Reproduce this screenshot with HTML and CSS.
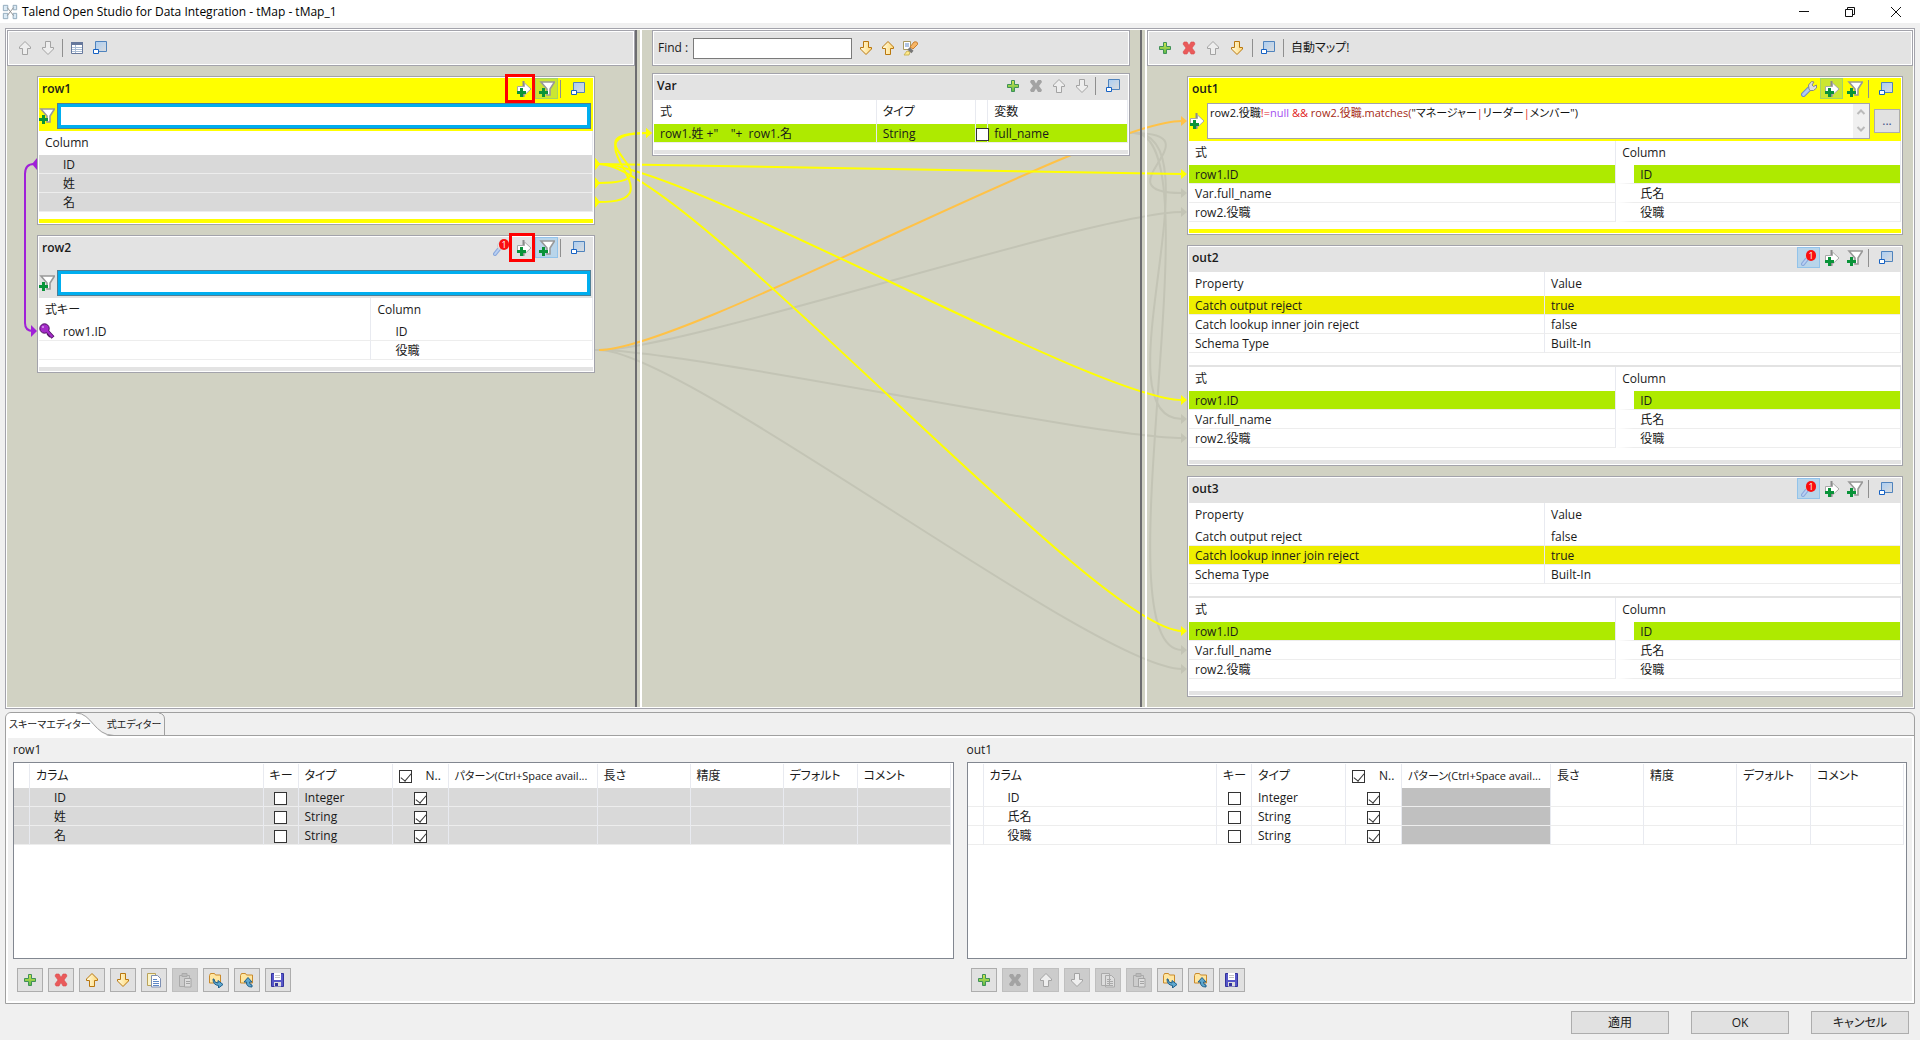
FILE: index.html
```html
<!DOCTYPE html>
<html lang="ja">
<head>
    <meta charset="utf-8">
    <meta name="viewport" content="width=device-width, initial-scale=1.0">
    <title>Talend Open Studio for Data Integration - tMap - tMap_1</title>
    <link rel="stylesheet" href="styles.css">
</head>
<body>
    <svg class="defs" aria-hidden="true">
        <defs>
            <linearGradient id="g-green" x1="0" y1="0" x2="0" y2="1"><stop offset="0" stop-color="#d3e84f"/><stop offset="1" stop-color="#5cb947"/></linearGradient>
            <linearGradient id="g-blue" x1="0" y1="0" x2="1" y2="1"><stop offset="0" stop-color="#a9cdf3"/><stop offset="1" stop-color="#dcdcdc"/></linearGradient>
            <linearGradient id="g-gold" x1="0" y1="0" x2="1" y2="0"><stop offset="0" stop-color="#fffbe0"/><stop offset="1" stop-color="#ffd97a"/></linearGradient>
        </defs>
        <symbol id="i-add" viewBox="0 0 16 16"><path d="M6.5 2.5h3v4h4v3h-4v4h-3v-4h-4v-3h4z" fill="url(#g-green)" stroke="#3f9158"/></symbol>
        <symbol id="i-del" viewBox="0 0 16 16"><path d="M3 2h3l2 3.500 2-3.500h3l1 2-3 4 3 4-1 2h-3l-2-3.500-2 3.500h-3l-1-2 3-4-3-4z" fill="#ea5a5a" stroke="#d8494b" stroke-width=".6"/></symbol>
        <symbol id="i-delgrey" viewBox="0 0 16 16"><path d="M3 2h3l2 3.500 2-3.500h3l1 2-3 4 3 4-1 2h-3l-2-3.500-2 3.500h-3l-1-2 3-4-3-4z" fill="#a3a3a3"/></symbol>
        <symbol id="i-up" viewBox="0 0 16 16"><path d="M8 1.500 13.500 7v1.500H10.500v6h-5v-6H2.500V7z" fill="url(#g-gold)" stroke="#b9770e"/></symbol>
        <symbol id="i-down" viewBox="0 0 16 16"><path d="M8 14.500 13.500 9V7.500H10.500v-6h-5v6H2.500V9z" fill="url(#g-gold)" stroke="#b9770e"/></symbol>
        <symbol id="i-upgrey" viewBox="0 0 16 16"><path d="M8 1.500 13.500 7v1.500H10.500v6h-5v-6H2.500V7z" fill="#eee" stroke="#a3a3a3"/></symbol>
        <symbol id="i-downgrey" viewBox="0 0 16 16"><path d="M8 14.500 13.500 9V7.500H10.500v-6h-5v6H2.500V9z" fill="#eee" stroke="#a3a3a3"/></symbol>
        <symbol id="i-restore" viewBox="0 0 16 16"><path d="M3.500 1.500h11v10h-11z" fill="url(#g-blue)" stroke="#4f83bd"/><path d="M1.500 9.500h5v4h-5z" fill="#fff" stroke="#1662c4"/></symbol>
        <symbol id="i-table" viewBox="0 0 16 16"><path d="M2.500 2.500h11v11h-11z" fill="#fff" stroke="#66789c"/><path d="M2 2h12v3H2z" fill="#66789c"/><path d="M3 7.500h10M3 9.500h10M3 11.500h10M6.500 5v8" stroke="#a9bcd4"/></symbol>
        <symbol id="i-expr" viewBox="0 0 16 16"><path d="M7.500 0v16" stroke="#8c8c8c" stroke-width="2"/><path d="M1.500 5.500h7v-3.500l6.500 6-6.500 6v-3.500h-7z" fill="#fff" stroke="#a8a8a8"/><path d="M4 7h3v3h3v3H7v3H4v-3H1v-3h3z" fill="#0a9339"/></symbol>
        <symbol id="i-filter" viewBox="0 0 16 16"><path d="M2 1h13.500l-4.500 7v6h-3V8z" fill="#fff" stroke="#999" stroke-width="1.600"/><path d="M3 7h3v3h3v3H6v3H3v-3H0v-3h3z" fill="#0a9339"/></symbol>
        <symbol id="i-wrench" viewBox="0 0 16 16"><path d="M2.500 13.500 8 8" stroke="#6e8bc6" stroke-width="5" stroke-linecap="round"/><path d="M2.500 13.500 8 8" stroke="#afc9f5" stroke-width="3" stroke-linecap="round"/><path d="M8 8 7.500 4l3-3.500 2.500.500-2 3 1.500 1.500 3-1.500v3l-3 2.500H9z" fill="#ddd" stroke="#888"/></symbol>
        <symbol id="i-search" viewBox="0 0 16 16"><path d="M2 14 6 9" stroke="#8aa8dc" stroke-width="4" stroke-linecap="round"/><path d="M2 14 6 9" stroke="#b9d0f3" stroke-width="2" stroke-linecap="round"/><circle cx="8" cy="6" r="3.500" fill="#eee" stroke="#ccc"/></symbol>
        <symbol id="i-key" viewBox="0 0 16 16"><path d="M7 7l7 7.500M12 10l-3 3" stroke="#4d1060" stroke-width="4"/><circle cx="5.500" cy="5.500" r="4.700" fill="#a42cc9" stroke="#4d1060"/><path d="M7 7l6.500 7" stroke="#a42cc9" stroke-width="2.500"/><circle cx="4" cy="4" r="1" fill="#dba0ee"/></symbol>
        <symbol id="i-mark" viewBox="0 0 16 16"><path d="M1.500 1.500h7v8h-7z" fill="#fff" stroke="#a89a60"/><path d="M3 4h4M3 6h4" stroke="#5f88c4"/><path d="M8 7l4-5q4-1 3.500 2.500L11 9z" fill="#f7b565" stroke="#c97e2e"/><path d="M2 15l3-4 3 1-1 3z" fill="#ffe98a" stroke="#cdb75a"/><path d="M6.500 8.500 10.500 12" stroke="#777" stroke-width="3"/></symbol>
        <symbol id="i-copy" viewBox="0 0 16 16"><path d="M1.500 1.500h8v12h-8z" fill="#fbf4c9" stroke="#b9a25a"/><path d="M5.500 3.500h6l3 3v8.500h-9z" fill="#fff" stroke="#7d8fb3"/><path d="M7 7.500h4M7 9.500h6M7 11.500h6M7 13.500h6" stroke="#5f88c4"/></symbol>
        <symbol id="i-copygrey" viewBox="0 0 16 16"><path d="M1.500 1.500h8v12h-8zM5.500 3.500h6l3 3v8.500h-9z" fill="#ddd" stroke="#aaa"/><path d="M7 7.500h4M7 9.500h6M7 11.500h6M7 13.500h6" stroke="#aaa"/></symbol>
        <symbol id="i-paste" viewBox="0 0 16 16"><path d="M2.500 3.500h10v11h-10z" fill="#ccc" stroke="#aaa"/><path d="M5 1.500h5v3H5z" fill="#bbb" stroke="#aaa"/><path d="M7.500 6.500h6.500v8.500H7.500z" fill="#ddd" stroke="#a5a5a5"/><path d="M9 9.500h4M9 11.500h4" stroke="#a5a5a5"/></symbol>
        <symbol id="i-import" viewBox="0 0 16 16"><path d="M1.500 3.500l1-2h4l1 1.500h5v8h-11z" fill="#ffe6a0" stroke="#c98a2c"/><path d="M6 7q0 4 4 4V8.500l5 4-4.500 3.500v-2.500Q5 13 5 7z" fill="#5fa8cf" stroke="#1f5f8b"/></symbol>
        <symbol id="i-export" viewBox="0 0 16 16"><path d="M1.500 3.500l1-2h4l1 1.500h6v8h-12z" fill="#ffe6a0" stroke="#c98a2c"/><path d="M13 15Q7 15 7.500 10H5l4-4.500 4 4.500h-2.500q0 3 2.500 3z" fill="#5fa8cf" stroke="#1f5f8b"/></symbol>
        <symbol id="i-save" viewBox="0 0 16 16"><path d="M1.500 1.500h12v13h-12z" fill="#5656c8" stroke="#33339c"/><path d="M4 1h7v7H4z" fill="#fff"/><path d="M5 3.500h5M5 5.500h5" stroke="#c3c3c3"/><path d="M4 10h7v4.500H4z" fill="#ddd"/><path d="M5 11h3v3H5z" fill="#33339c"/></symbol>
        <symbol id="i-logo" viewBox="0 0 18 18"><path d="M1.500 1.500h5v6h-5zM1.500 10.500h5v6h-5zM12.500 1.500h4v5h-4zM12.500 10.500h4v6h-4z" fill="#dbeaf5" stroke="#8ba5b8"/><path d="M6 4l7 9M6 13l7-9" stroke="#888" fill="none"/></symbol>
    </svg>

    <header class="titlebar">
        <svg class="logo"><use href="#i-logo"/></svg>
        <h1>Talend Open Studio for Data Integration - tMap - tMap_1</h1>
        <button class="win" aria-label="最小化"><svg viewBox="0 0 12 12"><path d="M1 5.500h10"/></svg></button>
        <button class="win" aria-label="元に戻す"><svg viewBox="0 0 12 12"><path d="M1.500 3.500h7v7h-7zM3.500 3.500v-2h7v7h-2"/></svg></button>
        <button class="win" aria-label="閉じる"><svg viewBox="0 0 12 12"><path d="M1 1l10 10M11 1 1 11"/></svg></button>
    </header>

    <main class="mapper" id="mapper">
        <svg class="links" id="links" aria-hidden="true"></svg>

        <section class="pane">
            <div class="toolbar">
                <button class="tool" aria-label="上へ"><svg><use href="#i-upgrey"/></svg></button>
                <button class="tool" aria-label="下へ"><svg><use href="#i-downgrey"/></svg></button>
                <span class="sep"></span>
                <button class="tool" aria-label="テーブル"><svg><use href="#i-table"/></svg></button>
                <button class="tool" aria-label="最小化"><svg><use href="#i-restore"/></svg></button>
            </div>
            <div class="cards inputs">
                <article class="card active">
                    <header class="card-head">
                        <h2>row1</h2>
                        <button class="act marked wide" aria-label="式フィルター"><svg><use href="#i-expr"/></svg></button>
                        <button class="act on" aria-label="フィルター"><svg><use href="#i-filter"/></svg></button>
                        <span class="sep"></span>
                        <button class="act last" aria-label="最小化"><svg><use href="#i-restore"/></svg></button>
                    </header>
                    <div class="filter">
                        <svg><use href="#i-filter"/></svg>
                        <input type="text" aria-label="row1 フィルター">
                    </div>
                    <table class="grid">
                        <thead><tr><th>Column</th></tr></thead>
                        <tbody class="selected">
                            <tr id="row1-id"><td class="deep">ID</td></tr>
                            <tr id="row1-sei"><td class="deep">姓</td></tr>
                            <tr id="row1-mei"><td class="deep">名</td></tr>
                        </tbody>
                    </table>
                    <div class="foot"></div>
                </article>

                <article class="card">
                    <header class="card-head">
                        <h2>row2</h2>
                        <button class="act" aria-label="設定"><svg><use href="#i-search"/></svg><span class="badge">1</span></button>
                        <button class="act marked" aria-label="式フィルター"><svg><use href="#i-expr"/></svg></button>
                        <button class="act on" aria-label="フィルター"><svg><use href="#i-filter"/></svg></button>
                        <span class="sep"></span>
                        <button class="act last" aria-label="最小化"><svg><use href="#i-restore"/></svg></button>
                    </header>
                    <div class="filter spaced">
                        <svg><use href="#i-filter"/></svg>
                        <input type="text" aria-label="row2 フィルター">
                    </div>
                    <table class="grid">
                        <colgroup><col class="w-key"><col></colgroup>
                        <thead><tr><th>式キー</th><th>Column</th></tr></thead>
                        <tbody>
                            <tr id="row2-id"><td><span class="keyed"><svg><use href="#i-key"/></svg>row1.ID</span></td><td class="deep">ID</td></tr>
                            <tr id="row2-yaku"><td></td><td class="deep">役職</td></tr>
                        </tbody>
                    </table>
                    <div class="foot"></div>
                </article>
            </div>
        </section>

        <div class="sash"></div>

        <section class="pane middle">
            <div class="toolbar find">
                <label for="find">Find :</label>
                <input type="text" id="find">
                <button class="tool" aria-label="次へ"><svg><use href="#i-down"/></svg></button>
                <button class="tool" aria-label="前へ"><svg><use href="#i-up"/></svg></button>
                <button class="tool" aria-label="強調表示"><svg><use href="#i-mark"/></svg></button>
            </div>
            <article class="card var">
                <header class="card-head">
                    <h2>Var</h2>
                    <button class="act" aria-label="追加"><svg><use href="#i-add"/></svg></button>
                    <button class="act" aria-label="削除"><svg><use href="#i-delgrey"/></svg></button>
                    <button class="act" aria-label="上へ"><svg><use href="#i-upgrey"/></svg></button>
                    <button class="act" aria-label="下へ"><svg><use href="#i-downgrey"/></svg></button>
                    <span class="sep"></span>
                    <button class="act last" aria-label="最小化"><svg><use href="#i-restore"/></svg></button>
                </header>
                <table class="grid">
                    <colgroup><col class="w-var"><col class="w-type"><col class="w-tick"><col></colgroup>
                    <thead><tr><th>式</th><th>タイプ</th><th></th><th>変数</th></tr></thead>
                    <tbody>
                        <tr id="var-full" class="green">
                            <td class="pre">row1.姓 +"    "+  row1.名</td>
                            <td>String</td>
                            <td class="tick"><input type="checkbox" aria-label="ヌル可"></td>
                            <td>full_name</td>
                        </tr>
                    </tbody>
                </table>
                <div class="foot"></div>
            </article>
        </section>

        <div class="sash"></div>

        <section class="pane">
            <div class="toolbar outbar">
                <button class="tool" aria-label="追加"><svg><use href="#i-add"/></svg></button>
                <button class="tool" aria-label="削除"><svg><use href="#i-del"/></svg></button>
                <button class="tool" aria-label="上へ"><svg><use href="#i-upgrey"/></svg></button>
                <button class="tool" aria-label="下へ"><svg><use href="#i-down"/></svg></button>
                <span class="sep"></span>
                <button class="tool" aria-label="最小化"><svg><use href="#i-restore"/></svg></button>
                <span class="sep"></span>
                <button class="automap">自動マップ!</button>
            </div>
            <div class="cards outputs">
                <article class="card active">
                    <header class="card-head">
                        <h2>out1</h2>
                        <button class="act" aria-label="設定"><svg><use href="#i-wrench"/></svg></button>
                        <button class="act on" aria-label="式フィルター"><svg><use href="#i-expr"/></svg></button>
                        <button class="act" aria-label="フィルター"><svg><use href="#i-filter"/></svg></button>
                        <span class="sep"></span>
                        <button class="act last" aria-label="最小化"><svg><use href="#i-restore"/></svg></button>
                    </header>
                    <div class="expr" id="out1-filter">
                        <svg><use href="#i-expr"/></svg>
                        <div class="code">
                            <div class="code-text" role="textbox" contenteditable="true" spellcheck="false" aria-label="式フィルター">row2.役職<i class="op">!=</i><i class="kw">null</i> <i class="op">&amp;&amp;</i> <i class="fn">row2.役職.matches(</i>"マネージャー<i class="op">|</i>リーダー<i class="op">|</i>メンバー")</div>
                            <svg class="scroll" viewBox="0 0 16 34"><path d="M4.500 10 8 6.500l3.500 3.500M4.500 23l3.500 3.500 3.500-3.500"/></svg>
                        </div>
                        <button class="more">...</button>
                    </div>
                    <table class="grid">
                        <colgroup><col class="w-expr"><col></colgroup>
                        <thead><tr><th>式</th><th>Column</th></tr></thead>
                        <tbody>
                            <tr id="out1-id" class="green"><td>row1.ID</td><td class="indent">ID</td></tr>
                            <tr id="out1-name"><td>Var.full_name</td><td class="indent">氏名</td></tr>
                            <tr id="out1-yaku"><td>row2.役職</td><td class="indent">役職</td></tr>
                        </tbody>
                    </table>
                    <div class="foot"></div>
                </article>

                <article class="card">
                    <header class="card-head">
                        <h2>out2</h2>
                        <button class="act on" aria-label="設定"><svg><use href="#i-search"/></svg><span class="badge">1</span></button>
                        <button class="act" aria-label="式フィルター"><svg><use href="#i-expr"/></svg></button>
                        <button class="act" aria-label="フィルター"><svg><use href="#i-filter"/></svg></button>
                        <span class="sep"></span>
                        <button class="act last" aria-label="最小化"><svg><use href="#i-restore"/></svg></button>
                    </header>
                    <table class="grid props">
                        <colgroup><col class="w-prop"><col></colgroup>
                        <thead><tr><th>Property</th><th>Value</th></tr></thead>
                        <tbody>
                            <tr class="yellow"><td>Catch output reject</td><td>true</td></tr>
                            <tr><td>Catch lookup inner join reject</td><td>false</td></tr>
                            <tr><td>Schema Type</td><td>Built-In</td></tr>
                        </tbody>
                    </table>
                    <table class="grid">
                        <colgroup><col class="w-expr"><col></colgroup>
                        <thead><tr><th>式</th><th>Column</th></tr></thead>
                        <tbody>
                            <tr id="out2-id" class="green"><td>row1.ID</td><td class="indent">ID</td></tr>
                            <tr id="out2-name"><td>Var.full_name</td><td class="indent">氏名</td></tr>
                            <tr id="out2-yaku"><td>row2.役職</td><td class="indent">役職</td></tr>
                        </tbody>
                    </table>
                    <div class="foot tall"></div>
                </article>

                <article class="card">
                    <header class="card-head">
                        <h2>out3</h2>
                        <button class="act on" aria-label="設定"><svg><use href="#i-search"/></svg><span class="badge">1</span></button>
                        <button class="act" aria-label="式フィルター"><svg><use href="#i-expr"/></svg></button>
                        <button class="act" aria-label="フィルター"><svg><use href="#i-filter"/></svg></button>
                        <span class="sep"></span>
                        <button class="act last" aria-label="最小化"><svg><use href="#i-restore"/></svg></button>
                    </header>
                    <table class="grid props">
                        <colgroup><col class="w-prop"><col></colgroup>
                        <thead><tr><th>Property</th><th>Value</th></tr></thead>
                        <tbody>
                            <tr><td>Catch output reject</td><td>false</td></tr>
                            <tr class="yellow"><td>Catch lookup inner join reject</td><td>true</td></tr>
                            <tr><td>Schema Type</td><td>Built-In</td></tr>
                        </tbody>
                    </table>
                    <table class="grid">
                        <colgroup><col class="w-expr"><col></colgroup>
                        <thead><tr><th>式</th><th>Column</th></tr></thead>
                        <tbody>
                            <tr id="out3-id" class="green"><td>row1.ID</td><td class="indent">ID</td></tr>
                            <tr id="out3-name"><td>Var.full_name</td><td class="indent">氏名</td></tr>
                            <tr id="out3-yaku"><td>row2.役職</td><td class="indent">役職</td></tr>
                        </tbody>
                    </table>
                    <div class="foot tall"></div>
                </article>
            </div>
        </section>
    </main>

    <section class="editor">
        <div class="tabs" role="tablist">
            <svg class="tab-shape" viewBox="0 0 160 24" aria-hidden="true">
                <path d="M0 24V6Q0 0 6 0H70C86 0 88 23.500 108 23.500V24z" fill="#fff"/>
                <path d="M70 0C86 0 88 22.500 108 22.500H160M158.500 23V6Q158.500 1 153 0" fill="none" stroke="#a0a0a0"/>
            </svg>
            <button class="tab" role="tab" aria-selected="true">スキーマエディター</button>
            <button class="tab" role="tab" aria-selected="false">式エディター</button>
        </div>
        <div class="schemas">
            <div class="schema">
                <h3>row1</h3>
                <div class="list">
                    <table class="grid">
                        <colgroup><col class="c-mark"><col><col class="c-key"><col class="c-type"><col class="c-null"><col class="c-pattern"><col class="c-num"><col class="c-num"><col class="c-def"><col class="c-num"></colgroup>
                        <thead><tr><th></th><th>カラム</th><th>キー</th><th>タイプ</th><th class="nullable"><input type="checkbox" checked aria-label="すべてヌル可"><span>N..</span></th><th class="small">パターン(Ctrl+Space avail...</th><th>長さ</th><th>精度</th><th>デフォルト</th><th>コメント</th></tr></thead>
                        <tbody class="selected">
                            <tr><td></td><td class="deep">ID</td><td class="tick"><input type="checkbox" aria-label="キー"></td><td>Integer</td><td class="tick"><input type="checkbox" checked aria-label="ヌル可"></td><td></td><td></td><td></td><td></td><td></td></tr>
                            <tr><td></td><td class="deep">姓</td><td class="tick"><input type="checkbox" aria-label="キー"></td><td>String</td><td class="tick"><input type="checkbox" checked aria-label="ヌル可"></td><td></td><td></td><td></td><td></td><td></td></tr>
                            <tr><td></td><td class="deep">名</td><td class="tick"><input type="checkbox" aria-label="キー"></td><td>String</td><td class="tick"><input type="checkbox" checked aria-label="ヌル可"></td><td></td><td></td><td></td><td></td><td></td></tr>
                        </tbody>
                    </table>
                </div>
                <div class="buttons">
                    <button aria-label="追加"><svg><use href="#i-add"/></svg></button>
                    <button aria-label="削除"><svg><use href="#i-del"/></svg></button>
                    <button aria-label="上へ"><svg><use href="#i-up"/></svg></button>
                    <button aria-label="下へ"><svg><use href="#i-down"/></svg></button>
                    <button aria-label="コピー"><svg><use href="#i-copy"/></svg></button>
                    <button aria-label="貼り付け" disabled><svg><use href="#i-paste"/></svg></button>
                    <button aria-label="インポート"><svg><use href="#i-import"/></svg></button>
                    <button aria-label="エクスポート"><svg><use href="#i-export"/></svg></button>
                    <button aria-label="保存"><svg><use href="#i-save"/></svg></button>
                </div>
            </div>
            <div class="schema">
                <h3>out1</h3>
                <div class="list">
                    <table class="grid">
                        <colgroup><col class="c-mark"><col><col class="c-key"><col class="c-type"><col class="c-null"><col class="c-pattern"><col class="c-num"><col class="c-num"><col class="c-def"><col class="c-num"></colgroup>
                        <thead><tr><th></th><th>カラム</th><th>キー</th><th>タイプ</th><th class="nullable"><input type="checkbox" checked aria-label="すべてヌル可"><span>N..</span></th><th class="small">パターン(Ctrl+Space avail...</th><th>長さ</th><th>精度</th><th>デフォルト</th><th>コメント</th></tr></thead>
                        <tbody>
                            <tr><td></td><td class="deep">ID</td><td class="tick"><input type="checkbox" aria-label="キー"></td><td>Integer</td><td class="tick"><input type="checkbox" checked aria-label="ヌル可"></td><td class="off"></td><td></td><td></td><td></td><td></td></tr>
                            <tr><td></td><td class="deep">氏名</td><td class="tick"><input type="checkbox" aria-label="キー"></td><td>String</td><td class="tick"><input type="checkbox" checked aria-label="ヌル可"></td><td class="off"></td><td></td><td></td><td></td><td></td></tr>
                            <tr><td></td><td class="deep">役職</td><td class="tick"><input type="checkbox" aria-label="キー"></td><td>String</td><td class="tick"><input type="checkbox" checked aria-label="ヌル可"></td><td class="off"></td><td></td><td></td><td></td><td></td></tr>
                        </tbody>
                    </table>
                </div>
                <div class="buttons">
                    <button aria-label="追加"><svg><use href="#i-add"/></svg></button>
                    <button aria-label="削除" disabled><svg><use href="#i-delgrey"/></svg></button>
                    <button aria-label="上へ" disabled><svg><use href="#i-upgrey"/></svg></button>
                    <button aria-label="下へ" disabled><svg><use href="#i-downgrey"/></svg></button>
                    <button aria-label="コピー" disabled><svg><use href="#i-copygrey"/></svg></button>
                    <button aria-label="貼り付け" disabled><svg><use href="#i-paste"/></svg></button>
                    <button aria-label="インポート"><svg><use href="#i-import"/></svg></button>
                    <button aria-label="エクスポート"><svg><use href="#i-export"/></svg></button>
                    <button aria-label="保存"><svg><use href="#i-save"/></svg></button>
                </div>
            </div>
        </div>
    </section>

    <footer class="dialog-buttons">
        <button>適用</button>
        <button>OK</button>
        <button>キャンセル</button>
    </footer>
    <script src="links.js"></script>
</body>
</html>
```

FILE: styles.css
```css
* {
    box-sizing: border-box;
}
body {
    margin: 0;
    min-height: 100vh;
    display: flex;
    flex-direction: column;
    background: #f0f0f0;
    color: #1a1a1a;
    font: 12px/16px "Open Sans", "Noto Sans CJK JP", sans-serif;
    font-feature-settings: "palt";
}
button, input {
    font: inherit;
    font-feature-settings: inherit;
    color: inherit;
    padding: 0;
    margin: 0;
}
h1, h2, h3 {
    margin: 0;
    font-size: 12px;
    font-weight: normal;
}
svg {
    display: block;
    flex: none;
    width: 16px;
    height: 16px;
}
.defs {
    position: absolute;
    width: 0;
    height: 0;
}

/* title bar */
.titlebar {
    display: flex;
    align-items: center;
    height: 23px;
    padding-left: 2px;
    background: #fff;
    color: #000;
}
.titlebar h1 {
    flex: 1;
    padding-left: 4px;
}
.win {
    width: 46px;
    height: 20px;
    border: none;
    background: none;
    display: grid;
    place-items: center;
}
.win:last-child {
    margin-right: 1px;
}
.win svg {
    width: 12px;
    height: 12px;
    fill: none;
    stroke: #111;
}

/* mapper */
.mapper {
    position: relative;
    display: grid;
    grid-template-columns: 628fr 7px 498fr 7px 766fr;
    margin: 5px 5px 3px;
    border: 1px solid #a3a3ab;
    outline: 1px solid #fff;
    outline-offset: -2px;
    padding: 1px;
    background: #d1d2c3;
}
.links {
    position: absolute;
    inset: 0;
    width: 100%;
    height: 100%;
}
.pane {
    min-width: 0;
}
.middle {
    padding: 0 10px;
}
.sash {
    position: relative;
    border-left: 2px solid #6d6d70;
    border-right: 2px solid #fff;
}
.toolbar {
    position: relative;
    display: flex;
    align-items: center;
    height: 36px;
    padding: 0 9px;
    gap: 7px;
    background: #e3e3e3;
    border: 1px solid #a3a3ab;
    box-shadow: inset 0 0 0 1px #fff;
}
.outbar {
    gap: 8px;
}
.find {
    padding: 0 5px;
    gap: 6px;
}
.find label {
    width: 29px;
    white-space: nowrap;
}
.find input {
    width: 159px;
    height: 21px;
    padding: 0 4px;
    background: #fff;
    border: 1px solid #7a7a7a;
}
.tool, .act, .automap {
    display: grid;
    place-items: center;
    border: none;
    background: none;
}
.sep {
    width: 1px;
    height: 18px;
    background: #8f8f8f;
}
.toolbar .sep {
    margin: 0 -1px;
}
.cards {
    display: grid;
    gap: 10px;
}
.inputs {
    padding: 10px 40px 10px 30px;
}
.outputs {
    padding: 10px 10px 10px 40px;
}
.card {
    position: relative;
    padding: 1px;
    background: #fff;
    border: 1px solid #a3a3ab;
}
.var {
    margin-top: 7px;
}
.card-head {
    display: flex;
    align-items: flex-start;
    height: 25px;
    padding-right: 6px;
    background: #e3e3e3;
}
.card-head h2 {
    flex: 1;
    padding: 3px 3px 0;
    font-weight: 600;
}
.card-head .sep {
    margin: 2px 4px 0 2px;
}
.active .card-head, .active .filter, .active .expr, .active .foot {
    background-color: #ff0;
}
.act {
    position: relative;
    width: 23px;
    height: 21px;
}
.act.last {
    width: 22px;
    padding-left: 4px;
}
.on {
    background: #b9d5ea;
    border: 1px solid #92c3ea;
}
.active .on {
    background: #cbe632;
    border-color: #a5d564;
}
.badge {
    position: absolute;
    top: 2px;
    right: 3px;
    width: 10px;
    height: 11px;
    border-radius: 5px;
    background: #fa0f0f;
    color: #fff;
    font-size: 9px;
    line-height: 11px;
    text-align: center;
}
.marked::after {
    content: "";
    position: absolute;
    inset: -4px 0 -4px -3px;
    border: 3px solid #f00;
}
.marked.wide::after {
    left: -7px;
}
.filter {
    display: flex;
    align-items: center;
    gap: 2px;
    padding: 0 2px 2px 0;
    background: #e3e3e3;
}
.filter.spaced {
    padding-top: 8px;
}
.filter input {
    flex: 1;
    height: 26px;
    padding: 0 4px;
    background: #fff;
    border: 4px solid #00aeef;
    outline: 1px solid #4f7f96;
    outline-offset: -1px;
}
.expr {
    display: flex;
    align-items: center;
    gap: 2px;
    padding-bottom: 2px;
}
.code {
    flex: 1;
    display: flex;
    height: 36px;
    background: #fff;
    border: 1px solid #a3a3ab;
}
.code-text {
    flex: 1;
    padding: 1px 2px;
    outline: none;
    color: #111;
    font-size: 11px;
}
.code i {
    font-style: normal;
}
.op {
    color: #e0241c;
}
.kw {
    color: #a34ff0;
}
.fn {
    color: #a52a14;
}
.scroll {
    width: 16px;
    height: 34px;
    background: #f0f0f0;
    fill: none;
    stroke: #bbb;
    stroke-width: 2;
}
.more {
    width: 26px;
    height: 24px;
    margin: 0 1px 0 2px;
    color: #3c4f86;
    line-height: 12px;
    background: #e1e1e1;
    border: 1px solid #adadad;
}

/* tables */
.grid {
    width: 100%;
    table-layout: fixed;
    border-collapse: separate;
    border-spacing: 0;
}
.grid th, .grid td {
    padding: 0 0 0 6px;
    text-align: left;
    font-weight: normal;
    white-space: nowrap;
    overflow: hidden;
    border-right: 1px solid #e8eaf0;
    background-clip: padding-box;
}
.grid th {
    height: 24px;
}
.grid td {
    height: 19px;
    padding-top: 1px;
    line-height: 17px;
    border-bottom: 1px solid #ededed;
}
.grid td.deep {
    padding-left: 24px;
}
.grid td.indent {
    border-left: 18px solid transparent;
}
.grid td.pre {
    white-space: pre;
}
.grid .tick {
    padding: 0;
    text-align: center;
    overflow: visible;
}
.grid th.small {
    font-size: 11px;
}
.green td {
    background-color: #aeea00;
}
.yellow td {
    background-color: #eeee00;
}
.selected td {
    background-color: #d9d9d9;
}
.grid td.off {
    background-color: #c0c0c0;
}
.keyed {
    display: flex;
    gap: 8px;
    height: 17px;
    margin-left: -6px;
}
.props {
    padding-bottom: 12px;
    border-bottom: 2px solid #e3e3e3;
}
.foot {
    height: 11px;
    border-top: 7px solid #fff;
    background: #e3e3e3;
}
.foot.tall {
    height: 16px;
    border-top-width: 12px;
}
.w-key {
    width: 60%;
}
.w-var {
    width: 47%;
}
.w-type {
    width: 21%;
}
.w-tick {
    width: 12px;
}
.w-expr {
    width: 60%;
}
.w-prop {
    width: 50%;
}
input[type="checkbox"] {
    appearance: none;
    position: relative;
    width: 13px;
    height: 13px;
    vertical-align: middle;
    background: #fff;
    border: 1px solid #333;
}
input[type="checkbox"]:checked::before {
    content: "";
    position: absolute;
    left: 3px;
    top: 0;
    width: 5px;
    height: 9px;
    border: solid #333;
    border-width: 0 1px 1px 0;
    transform: rotate(40deg);
}

/* schema editor */
.editor {
    flex: 1;
    display: flex;
    flex-direction: column;
    margin: 0 5px;
    border: 1px solid #a0a0a0;
    border-radius: 6px 6px 0 0;
}
.tabs {
    position: relative;
    display: flex;
    gap: 10px;
    height: 23px;
    border-bottom: 1px solid #a0a0a0;
}
.tab-shape {
    position: absolute;
    left: 0;
    top: 0;
    width: 160px;
    height: 24px;
}
.tab {
    position: relative;
    padding: 0 3px;
    border: none;
    background: none;
    font-size: 10px;
}
.schemas {
    flex: 1;
    display: grid;
    grid-template-columns: 1fr 1fr;
    gap: 13px;
    padding: 0 5px 9px;
    border: 2px solid #fff;
}
.schema {
    display: flex;
    flex-direction: column;
    min-width: 0;
}
.schema h3 {
    padding: 4px 0;
}
.list {
    flex: 1;
    min-height: 120px;
    padding: 1px 2px 0 0;
    background: #fff;
    border: 1px solid #828790;
}
.c-mark {
    width: 16px;
}
.c-key {
    width: 35px;
}
.c-type {
    width: 94px;
}
.c-null {
    width: 56px;
}
.c-pattern {
    width: 149px;
}
.c-num {
    width: 93px;
}
.c-def {
    width: 74px;
}
.nullable span {
    padding-left: 14px;
}
.buttons {
    display: flex;
    gap: 5px;
    padding: 9px 4px 0;
}
.buttons button {
    display: grid;
    place-items: center;
    width: 26px;
    height: 24px;
    background: #e1e1e1;
    border: 1px solid #adadad;
}
.buttons button:disabled {
    background: #ccc;
    border-color: #bfbfbf;
}
.dialog-buttons {
    display: flex;
    justify-content: flex-end;
    gap: 22px;
    padding: 7px 11px 6px;
}
.dialog-buttons button {
    width: 98px;
    height: 23px;
    line-height: 20px;
    background: #e1e1e1;
    border: 1px solid #adadad;
}
```

FILE: links.js
```js
"use strict";
const Yellow = "#ffff00", Grey = "#c3c4b5", Orange = "#ffc247", Purple = "#a020d8";
const Links = [
    ["var-full", "out1-name", Grey],
    ["var-full", "out2-name", Grey],
    ["var-full", "out3-name", Grey],
    ["row2-yaku", "out1-yaku", Grey],
    ["row2-yaku", "out2-yaku", Grey],
    ["row2-yaku", "out3-yaku", Grey],
    ["row2-yaku", "out1-filter", Orange],
    ["row1-sei", "var-full", Yellow],
    ["row1-mei", "var-full", Yellow],
    ["row1-id", "out1-id", Yellow],
    ["row1-id", "out2-id", Yellow],
    ["row1-id", "out3-id", Yellow],
];
const Bend = 85;

const svg = document.getElementById("links");

const add = (d, stroke, fill) => {
    const p = document.createElementNS("http://www.w3.org/2000/svg", "path");
    p.setAttribute("d", d);
    p.setAttribute("fill", fill || "none");
    if (stroke) {
        p.setAttribute("stroke", stroke);
        p.setAttribute("stroke-width", 2);
    }
    svg.append(p);
};

// card edges and row centre, relative to the drawing
const anchor = id => {
    const base = svg.getBoundingClientRect();
    const row = document.getElementById(id);
    const r = row.getBoundingClientRect();
    const c = row.closest(".card").getBoundingClientRect();
    return {
        left: c.left - base.left,
        right: c.right - base.left,
        y: Math.floor(r.top + (r.height - 1) / 2 - base.top),
    };
};

const draw = () => {
    svg.replaceChildren();
    for (const [from, to, color] of Links) {
        const a = anchor(from), b = anchor(to);
        const x1 = a.right + 4, x2 = b.left - 5;
        const lead = color === Orange ? "" : `M${a.right} ${a.y}H${x1}`;
        add(`${lead}M${x1} ${a.y}C${x1 + Bend} ${a.y} ${x2 - Bend} ${b.y} ${x2} ${b.y}`, color);
        add(`M${b.left - 6} ${b.y - 5}l6 5l-6 5z`, null, color);
        if (color === Yellow) add(`M${a.right} ${a.y - 6}l5 6l-5 6z`, null, color);
    }
    // join between row1 and its lookup
    const a = anchor("row1-id"), b = anchor("row2-id");
    const x = a.left, v = x - 12;
    add(`M${x - 3} ${a.y}Q${v} ${a.y} ${v} ${a.y + 10}V${b.y - 8}Q${v} ${b.y} ${x - 4} ${b.y}`, Purple);
    add(`M${x} ${a.y - 6}l-5 6l5 6z`, null, Purple);
    add(`M${x - 6} ${b.y - 6}l6 6l-6 6z`, null, Purple);
};

draw();
window.addEventListener("resize", draw);
```
